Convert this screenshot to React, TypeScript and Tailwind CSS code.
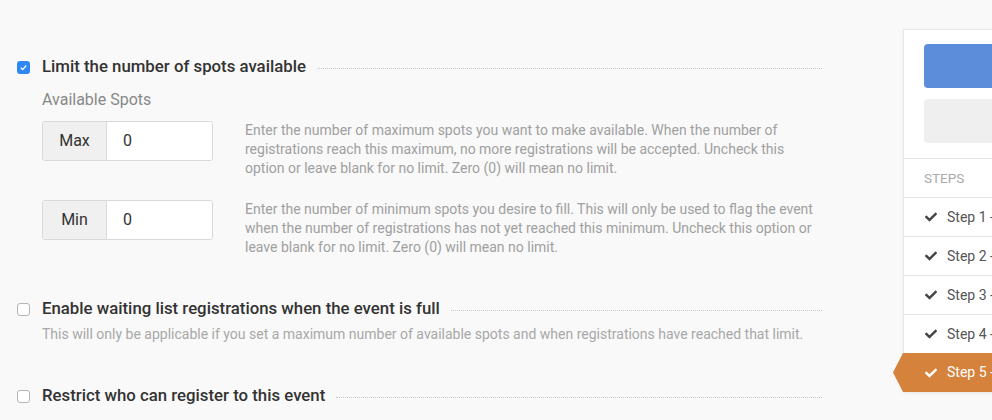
import React from 'react';

const CheckIcon = ({ className }: { className?: string }) => (
  <svg viewBox="0 0 512 512" className={className} fill="currentColor">
    <path d="M173.898 439.404l-166.4-166.4c-9.997-9.997-9.997-26.206 0-36.204l36.203-36.204c9.997-9.998 26.207-9.998 36.204 0L192 312.69 432.095 72.596c9.997-9.997 26.207-9.997 36.204 0l36.203 36.204c9.997 9.997 9.997 26.206 0 36.204l-294.4 294.401c-9.998 9.997-26.207 9.997-36.204-.001z" />
  </svg>
);

const Box = ({ checked }: { checked?: boolean }) =>
  checked ? (
    <span className="w-[13px] h-[13px] rounded-[3px] bg-[#2f87f2] flex items-center justify-center shrink-0">
      <svg viewBox="0 0 10 10" className="w-[9px] h-[9px]" fill="none" stroke="white" strokeWidth="1.5">
        <path d="M2 5.2 L4.1 7.3 L8 2.8" />
      </svg>
    </span>
  ) : (
    <span className="w-[13px] h-[13px] rounded-[3px] bg-white border border-[#b5b5b5] shrink-0" />
  );

const OptionTitle = ({ checked, label }: { checked?: boolean; label: string }) => (
  <div className="flex items-center h-5">
    <Box checked={checked} />
    <span className="ml-[12px] text-[16.8px] font-medium text-[#333] whitespace-nowrap">{label}</span>
    <span className="flex-1 ml-[11px] mt-[2px] border-t border-dotted border-[#c8c8c8]" />
  </div>
);

const SpotRow = ({ addon, help }: { addon: string; help: string }) => (
  <div className="flex items-start">
    <div className="flex w-[171px] h-10 border border-[#d9d9d9] rounded-[3px] overflow-hidden shrink-0">
      <div className="w-[64px] bg-[#f0f0f0] border-r border-[#d9d9d9] flex items-center justify-center text-[16px] text-[#333]">
        {addon}
      </div>
      <div className="flex-1 bg-white flex items-center pl-[16px] text-[16px] text-[#333]">0</div>
    </div>
    <p className="ml-[32px] w-[575px] text-[14px] leading-[19px] text-[#a0a0a0]">{help}</p>
  </div>
);

const steps = ['Step 1 - Details', 'Step 2 - Tickets', 'Step 3 - Form', 'Step 4 - Payment', 'Step 5 - Spots'];

const App = () => {
  return (
    <div className="w-[992px] h-[420px] bg-[#f9f9f9] flex overflow-hidden" style={{ fontFamily: 'Roboto, "Liberation Sans", sans-serif' }}>
      {/* Main form */}
      <div className="w-[805px] ml-[17px] pt-[57px] shrink-0">
        <OptionTitle checked label="Limit the number of spots available" />
        <div className="pl-[25px]">
          <div className="mt-[13px] text-[16px] leading-5 text-[#888]">Available Spots</div>
          <div className="mt-[11px] flex flex-col gap-[22px]">
            <SpotRow
              addon="Max"
              help="Enter the number of maximum spots you want to make available. When the number of registrations reach this maximum, no more registrations will be accepted. Uncheck this option or leave blank for no limit. Zero (0) will mean no limit."
            />
            <SpotRow
              addon="Min"
              help="Enter the number of minimum spots you desire to fill. This will only be used to flag the event when the number of registrations has not yet reached this minimum. Uncheck this option or leave blank for no limit. Zero (0) will mean no limit."
            />
          </div>
        </div>

        <div className="mt-[42px]">
          <OptionTitle label="Enable waiting list registrations when the event is full" />
          <p className="pl-[25px] mt-[6px] text-[14px] leading-[19px] text-[#a8a8a8] whitespace-nowrap">
            This will only be applicable if you set a maximum number of available spots and when registrations have reached that limit.
          </p>
        </div>

        <div className="mt-[42px]">
          <OptionTitle label="Restrict who can register to this event" />
        </div>
      </div>

      {/* Sidebar */}
      <div className="ml-[81px] mt-[29px] w-[140px] shrink-0 self-start bg-white border-l border-t border-[#e8e8e8] shadow-[0_1px_3px_rgba(0,0,0,0.08)]">
        <div className="pl-[20px] pt-[14px] pb-[15px] flex flex-col gap-[11px]">
          <div className="h-[44px] rounded-[4px] bg-[#5b8ddb]" />
          <div className="h-[44px] rounded-[4px] bg-[#efefef]" />
        </div>
        <div className="h-[39px] border-t border-[#e6e6e6] flex items-center pl-[20px] text-[13.5px] text-[#aaa]">
          STEPS
        </div>
        {steps.map((s, i) => {
          const active = i === steps.length - 1;
          return active ? (
            <div key={s} className="relative h-[39px] -ml-px bg-[#d4823c] flex items-center pl-[22px] text-[14px] text-white whitespace-nowrap">
              <svg viewBox="0 0 10 39" className="absolute -left-[10px] top-0 w-[10px] h-[39px]">
                <polygon points="10,0 0,19.5 10,39" fill="#d4823c" />
              </svg>
              <CheckIcon className="w-[12px] h-[12px] shrink-0 text-white" />
              <span className="ml-[10px]">{s}</span>
            </div>
          ) : (
            <div key={s} className="h-[39px] border-t border-[#e6e6e6] flex items-center pl-[21px] text-[14px] text-[#555] whitespace-nowrap">
              <CheckIcon className="w-[12px] h-[12px] shrink-0 text-[#444]" />
              <span className="ml-[10px]">{s}</span>
            </div>
          );
        })}
      </div>
    </div>
  );
};

export default App;
